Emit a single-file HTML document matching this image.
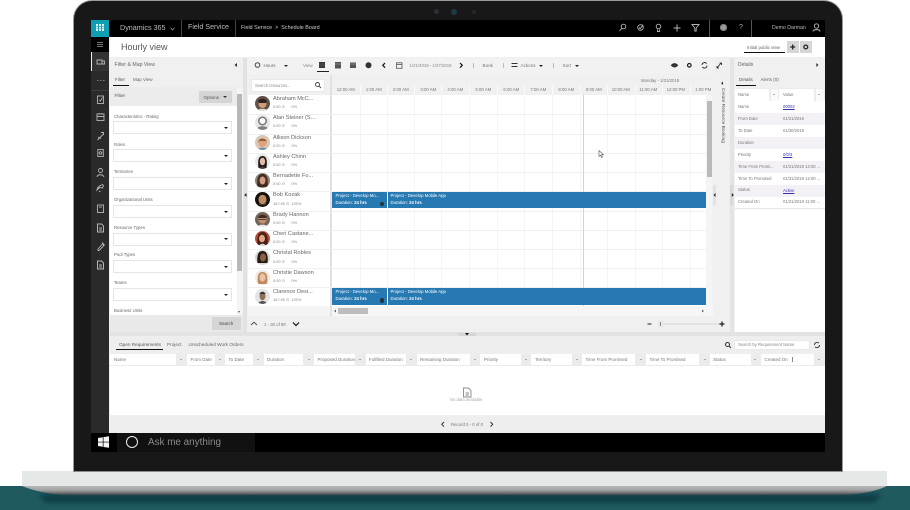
<!DOCTYPE html>
<html><head><meta charset="utf-8"><title>Schedule Board</title>
<style>
html,body{margin:0;padding:0;background:#fff;overflow:hidden}
#o{position:relative;width:910px;height:510px;overflow:hidden;background:#fff}
#p{position:absolute;left:0;top:0;width:910px;height:510px;filter:blur(.35px);font-family:"Liberation Sans",sans-serif}
#p div,#p svg,#p span{position:absolute}
.t{white-space:nowrap;font-size:4.3px;line-height:6px;color:#666}
.n{font-size:5.6px;color:#666}
.s{font-size:3.9px;color:#888}
.h{font-size:4.3px;color:#777;width:27.6px;text-align:center;top:87px}
.i{background:#fff;border:1px solid #e6e3e9;box-sizing:border-box;left:113px;width:119px;height:13px}
.a{width:0;height:0;border-left:2px solid transparent;border-right:2px solid transparent;border-top:2px solid #222}
.v{width:1px;top:95px;height:211px;background:#f4f5f6}
.r{left:248px;width:458px;height:1px;background:#eef0f1}
.av{width:15px;height:15px;left:254.5px;border-radius:50%;overflow:hidden;background:#ddd}
.c{font-size:4.5px;color:#777;top:356.5px}
.cb{background:#fff;top:354px;height:11px}
.dd{width:0;height:0;border-left:1.5px solid transparent;border-right:1.5px solid transparent;border-top:1.7px solid #666;top:359px}
.w{font-size:4.3px;color:#fff}
.dt{font-size:4.2px;color:#777;left:738px}
.dv{font-size:4.2px;color:#777;left:783px}
</style></head><body><div id="o"><div id="p">

<!-- teal floor -->
<div style="left:-10px;top:486px;width:930px;height:34px;background:#1f5a61"></div>
<div style="left:40px;top:494px;width:840px;height:9px;background:#103f47;border-radius:0 0 30px 30px;filter:blur(2px)"></div>
<!-- base -->
<svg style="left:22px;top:471px" width="866" height="26" viewBox="0 0 866 26"><defs><linearGradient id="g" x1="0" y1="0" x2="0" y2="1"><stop offset="0" stop-color="#b3b8b8"/><stop offset=".45" stop-color="#a2a4a4"/><stop offset=".8" stop-color="#6a6b6c"/><stop offset="1" stop-color="#3a4448"/></linearGradient></defs><path d="M0 15H865C855 20 840 23 822 24H44C26 23 12 20 0 15Z" fill="url(#g)"/><rect width="865" height="15" fill="#e4e8e7"/></svg>
<!-- bezel -->
<div style="left:72.5px;top:0;width:770px;height:472px;box-sizing:border-box;background:#181818;border:1px solid #9b9b9d;border-bottom-color:#8a8c8c;border-radius:19px 19px 0 0"></div>
<div style="left:434px;top:9px;width:5px;height:5px;border-radius:50%;background:#2a3036"></div>
<div style="left:451px;top:8.5px;width:6px;height:6px;border-radius:50%;background:#1d3a48"></div>
<div style="left:471.5px;top:9.5px;width:4px;height:4px;border-radius:50%;background:#24282b"></div>

<!-- screen -->
<div style="left:91px;top:20px;width:734px;height:413px;background:#efeff0"></div>
<!-- top nav -->
<div style="left:91px;top:20px;width:734px;height:16.5px;background:#000"></div>
<div style="left:91px;top:20px;width:18px;height:16.5px;background:#0f9fb5"></div>
<svg style="left:96px;top:24px" width="8" height="7"><path d="M0 0h2v2H0zM3 0h2v2H3zM6 0h2v2H6zM0 2.6h2v2H0zM3 2.6h2v2H3zM6 2.6h2v2H6zM0 5h2v2H0zM3 5h2v2H3zM6 5h2v2H6z" fill="#dff4f7"/></svg>
<div class="t" style="left:120px;top:23px;font-size:7.2px;line-height:9px;color:#bbb">Dynamics 365</div>
<svg style="left:170px;top:27px" width="5" height="4"><path d="M.5.7 2.5 3 4.500.7" fill="none" stroke="#aaa" stroke-width=".7"/></svg>
<div style="left:181px;top:20px;width:1px;height:16.500px;background:#444"></div>
<div class="t" style="left:188px;top:22.500px;font-size:7.100px;line-height:9px;color:#bbb">Field Service</div>
<div style="left:235px;top:20px;width:1px;height:16.500px;background:#444"></div>
<div class="t" style="left:241px;top:25px;font-size:5.400px;color:#ccc">Field Service &nbsp;&gt;&nbsp; Schedule Board</div>
<!-- top icons -->
<svg style="left:617px;top:22px" width="150" height="12" fill="none" stroke="#b5b5b5" stroke-width=".9">
<circle cx="6.500" cy="4.500" r="2.300"/><path d="M5 6 2.500 9"/>
<circle cx="23.500" cy="5.500" r="2.800"/><path d="M22 5.500l1.200 1.200 3-4"/>
<circle cx="41.500" cy="4.500" r="2.300"/><path d="M40.500 7.500v2h2v-2"/>
<path d="M60 2.500v7M56.500 6h7" stroke-width="1"/>
<path d="M75 2.500h7l-2.800 3.500v3h-1.400v-3z"/>
<circle cx="106.500" cy="5.500" r="3.200" fill="#999" stroke="#777"/>
</svg>
<div style="left:709px;top:20px;width:1px;height:16.500px;background:#555"></div>
<div style="left:751px;top:20px;width:1px;height:16.500px;background:#555"></div>
<div class="t" style="left:739px;top:23.500px;font-size:7px;line-height:8px;color:#aaa">?</div>
<div class="t" style="left:772px;top:25px;font-size:5.200px;color:#bbb">Demo Darman</div>
<svg style="left:812px;top:23px" width="9" height="10" fill="none" stroke="#bbb" stroke-width=".9"><circle cx="4.500" cy="3" r="2.200"/><path d="M1 8.500c.5-2.500 6.500-2.500 7 0"/></svg>

<!-- side nav -->
<div style="left:91px;top:36.500px;width:18px;height:396.500px;background:#2a2a2a"></div>
<div style="left:91px;top:36.500px;width:18px;height:16px;background:#000"></div>
<svg style="left:96px;top:42px" width="8" height="6"><path d="M1 .5h6M1 2.500h6M1 4.500h6" stroke="#999" stroke-width=".8"/></svg>
<div style="left:91px;top:52px;width:1.300px;height:19px;background:#eee"></div>
<div style="left:92.300px;top:52px;width:16.700px;height:19px;background:#333"></div>
<div style="left:91px;top:89.500px;width:18px;height:1px;background:#3d3d3d"></div>
<svg style="left:91px;top:52px" width="18" height="230" fill="none" stroke="#b5b5b5" stroke-width=".9">
<path d="M6 8h5v4H6zM11 9h2.500v3H11z"/>
<path d="M6.500 28.500h.8M9.500 28.500h.8M12.500 28.500h.8" stroke="#ccc"/>
<rect x="6.500" y="44" width="6" height="7.500"/><path d="M8 48l1.500 1 2-3.500"/>
<rect x="6" y="62" width="7" height="6.500"/><path d="M6 64.500h7M8 62v-1M11 62v-1"/>
<path d="M6.500 88l6-6M10 80.500h2.500V83M7 85l3 1.500" />
<rect x="6.800" y="97.500" width="5.500" height="7"/><circle cx="9.500" cy="101" r="1.300"/>
<circle cx="9.500" cy="118.500" r="2"/><path d="M6 125c.5-3 6-3 7 0"/>
<path d="M6 138l2.500-2.500 3 .5 1-2.500-1-1-3 1.500-2 2z M8 139l1.500 1"/>
<rect x="6.500" y="153" width="6" height="7.500"/><path d="M8 155h3"/>
<path d="M6.500 172h4l2 2v6h-6zM8 176h3M8 178h3" stroke-width="1"/>
<path d="M7 197l4.500-5 1.500 1.500-5 5H7zM11 190.500l2.500 2.500"/>
<path d="M6.500 209h4l2 2v6h-6zM8 213h3M8 215h3" stroke-width="1"/>
</svg>

<!-- title row -->
<div style="left:109.500px;top:36.500px;width:715.500px;height:20.500px;background:#fff"></div>
<div class="t" style="left:121px;top:41.500px;font-size:9px;line-height:11px;color:#555">Hourly view</div>
<div class="t" style="left:747px;top:44.500px;font-size:4.400px;color:#666">Initial public view</div>
<div style="left:743.500px;top:52px;width:41px;height:1.100px;background:#111"></div>
<div style="left:787px;top:40.500px;width:11.500px;height:12px;background:#d6d6d6"></div>
<div style="left:800px;top:40.500px;width:11.500px;height:12px;background:#d6d6d6"></div>
<svg style="left:787px;top:40.500px" width="25" height="12"><path d="M5.700 3.500v5M3.200 6h5" stroke="#222" stroke-width="1.300"/><circle cx="18.800" cy="6" r="1.900" fill="none" stroke="#222" stroke-width="1.300"/></svg>

<!-- filter panel -->
<div style="left:110px;top:58px;width:133px;height:274px;background:#f1f0f1"></div>
<div class="t" style="left:114.500px;top:61.500px;font-size:5.200px;color:#666">Filter &amp; Map View</div>
<svg style="left:234px;top:63px" width="3" height="4"><path d="M3 0v4L.5 2z" fill="#333"/></svg>
<div class="t" style="left:115px;top:76.500px;font-size:4.500px;color:#555">Filter</div>
<div class="t" style="left:133px;top:76.500px;font-size:4.500px;color:#666">Map View</div>
<div style="left:112.500px;top:84.500px;width:16px;height:1px;background:#111"></div>
<div style="left:110px;top:87px;width:127px;height:19px;background:#ececec"></div>
<div style="left:110px;top:106px;width:127px;height:209px;background:#fff"></div>
<div class="t" style="left:114.500px;top:94px;font-size:4.800px;color:#555">Filter</div>
<div style="left:198.500px;top:91px;width:33px;height:12px;background:#d5d5d5"></div>
<div class="t" style="left:203.500px;top:94.500px;font-size:4.500px;color:#555">Options</div>
<div class="a" style="left:223px;top:96.300px;border-top-color:#333"></div>
<div class="t" style="left:114px;top:113.500px">Characteristics - Rating</div><div class="i" style="top:121px"></div><div class="a" style="left:224px;top:127px"></div>
<div class="t" style="left:114px;top:141.500px">Roles</div><div class="i" style="top:149px"></div><div class="a" style="left:224px;top:155px"></div>
<div class="t" style="left:114px;top:169px">Territories</div><div class="i" style="top:177px"></div><div class="a" style="left:224px;top:183px"></div>
<div class="t" style="left:114px;top:196.500px">Organizational Units</div><div class="i" style="top:205px"></div><div class="a" style="left:224px;top:210.500px"></div>
<div class="t" style="left:114px;top:224.500px">Resource Types</div><div class="i" style="top:232.500px"></div><div class="a" style="left:224px;top:238px"></div>
<div class="t" style="left:114px;top:252px">Pool Types</div><div class="i" style="top:260px"></div><div class="a" style="left:224px;top:266px"></div>
<div class="t" style="left:114px;top:280px">Teams</div><div class="i" style="top:288px"></div><div class="a" style="left:224px;top:294px"></div>
<div class="t" style="left:114px;top:308px">Business Units</div>
<div style="left:237px;top:88px;width:5.500px;height:227px;background:#f4f4f4"></div>
<div style="left:237px;top:94px;width:5px;height:177px;background:#b8b8b8"></div>
<div class="a" style="left:237.800px;top:311px;border-top-color:#555;border-left-width:1.500px;border-right-width:1.500px"></div>
<div style="left:110px;top:315px;width:133px;height:17px;background:#e9e9ea"></div>
<div style="left:212px;top:317px;width:28.500px;height:13px;background:#d5d5d5"></div>
<div class="t" style="left:219px;top:320.500px;font-size:4.500px;color:#444">Search</div>

<!-- splitter -->
<div style="left:243px;top:58px;width:3.500px;height:274px;background:#e2e2e3"></div>
<svg style="left:244px;top:193px" width="3" height="4"><path d="M2.500 0v4L.2 2z" fill="#222"/></svg>

<!-- schedule toolbar -->
<div style="left:247px;top:58px;width:466px;height:16px;background:#f2f2f2"></div>
<svg style="left:253px;top:60px" width="12" height="11" fill="none" stroke="#444" stroke-width="1"><circle cx="4.500" cy="5" r="2.300"/></svg>
<div class="t" style="left:263.500px;top:62.500px;font-size:4.500px;color:#666">Hours</div>
<div class="a" style="left:283.500px;top:64.500px"></div>
<div class="t" style="left:303px;top:62.500px;font-size:4.500px;color:#888">View</div>
<svg style="left:317px;top:60px" width="60" height="11"><path d="M2 2h6v6H2z" fill="#333"/><path d="M2 4h6M2 6h6" stroke="#888" stroke-width=".4"/><path d="M18 2h6v6.500h-6zM33 2.500h6v5.500h-6z" fill="#555"/><path d="M18 4h6M33 4h6" stroke="#ccc" stroke-width=".4"/><circle cx="51.500" cy="5.300" r="3" fill="#333"/></svg>
<div style="left:317px;top:70.500px;width:12px;height:1px;background:#222"></div>
<svg style="left:381px;top:60px" width="90" height="11" fill="none"><path d="M4 3 1.800 5.300 4 7.700" stroke="#111" stroke-width="1.200"/><rect x="15.500" y="2.800" width="5.500" height="5.500" stroke="#555" stroke-width=".8"/><path d="M15.500 4.500h5.500" stroke="#555" stroke-width=".8"/><path d="M79 3l2.300 2.300L79 7.700" stroke="#111" stroke-width="1.200"/></svg>
<div class="t" style="left:409.500px;top:62.500px;font-size:4.300px;color:#888">1/21/2019 - 1/27/2019</div>
<div style="left:472.500px;top:63px;width:.7px;height:5px;background:#bbb"></div>
<div class="t" style="left:482.500px;top:62.500px;font-size:4.600px;color:#777">Book</div>
<div style="left:502.500px;top:63px;width:.7px;height:5px;background:#bbb"></div>
<svg style="left:511px;top:62px" width="7" height="6"><path d="M.5 1.500h6M.5 4.500h6" stroke="#333" stroke-width="1"/></svg>
<div class="t" style="left:520.500px;top:62.500px;font-size:4.600px;color:#777">Actions</div>
<div class="a" style="left:539px;top:64.500px"></div>
<div style="left:552.500px;top:63px;width:.7px;height:5px;background:#bbb"></div>
<div class="t" style="left:562.500px;top:62.500px;font-size:4.600px;color:#777">Sort</div>
<div class="a" style="left:574.500px;top:64.500px"></div>
<svg style="left:670px;top:60px" width="55" height="11" fill="none" stroke="#222"><path d="M1 5.300c2-2.500 5-2.500 7 0-2 2.500-5 2.500-7 0z" fill="#333" stroke-width=".5"/><circle cx="19.300" cy="5.300" r="1.800" stroke-width="1.200"/><path d="M32 5a2.600 2.600 0 0 1 4.700-1.400M37 5.600a2.600 2.600 0 0 1-4.700 1.400" stroke-width=".9"/><path d="M47 8l4-5M49.500 3H51.500V5M47 6v2h2" stroke-width=".8"/></svg>

<!-- resources + grid -->
<div style="left:247px;top:74px;width:466px;height:242px;background:#f0f0f1"></div>
<div style="left:248px;top:95px;width:82px;height:211px;background:#fff"></div>
<div style="left:331.500px;top:95px;width:374.500px;height:211px;background:#fff"></div>
<div style="left:330px;top:75px;width:1.500px;height:241px;background:#e1e1e3"></div>
<div style="left:251px;top:79px;width:74px;height:12.500px;background:#fff;border:1px solid #e8e8e8;box-sizing:border-box"></div>
<div class="t" style="left:255px;top:83px;font-size:4.100px;color:#888">Search resources...</div>
<svg style="left:314px;top:81px" width="8" height="8" fill="none" stroke="#444" stroke-width=".9"><circle cx="3.500" cy="3.500" r="2"/><path d="M5 5l2 2"/></svg>
<div class="t" style="left:641px;top:77.500px;font-size:4.300px;color:#777">Monday - 1/21/2019</div>
<!-- headers -->
<div class="t h" style="left:332px">12:00 AM</div><div class="t h" style="left:360px">1:00 AM</div><div class="t h" style="left:387px">2:00 AM</div><div class="t h" style="left:414.500px">3:00 AM</div><div class="t h" style="left:441.500px">4:00 AM</div><div class="t h" style="left:469.500px">5:00 AM</div><div class="t h" style="left:497.500px">6:00 AM</div><div class="t h" style="left:524.500px">7:00 AM</div><div class="t h" style="left:552.500px">8:00 AM</div><div class="t h" style="left:580px">9:00 AM</div><div class="t h" style="left:607px">10:00 AM</div><div class="t h" style="left:634.500px">11:00 AM</div><div class="t h" style="left:662px">12:00 PM</div><div class="t h" style="left:689.500px">1:00 PM</div>
<div style="left:359.700px;top:85px;width:1px;height:10px;background:#fafafa"></div><div style="left:386.700px;top:85px;width:1px;height:10px;background:#fafafa"></div><div style="left:414.300px;top:85px;width:1px;height:10px;background:#fafafa"></div><div style="left:441.300px;top:85px;width:1px;height:10px;background:#fafafa"></div><div style="left:469.300px;top:85px;width:1px;height:10px;background:#fafafa"></div><div style="left:497.300px;top:85px;width:1px;height:10px;background:#fafafa"></div><div style="left:524.300px;top:85px;width:1px;height:10px;background:#fafafa"></div><div style="left:552.300px;top:85px;width:1px;height:10px;background:#fafafa"></div><div style="left:580px;top:85px;width:1px;height:10px;background:#fafafa"></div><div style="left:607px;top:85px;width:1px;height:10px;background:#fafafa"></div><div style="left:634.500px;top:85px;width:1px;height:10px;background:#fafafa"></div><div style="left:662px;top:85px;width:1px;height:10px;background:#fafafa"></div><div style="left:689.500px;top:85px;width:1px;height:10px;background:#fafafa"></div>
<!-- grid lines -->
<div class="v" style="left:359.700px"></div><div class="v" style="left:386.700px"></div><div class="v" style="left:414.300px"></div><div class="v" style="left:441.300px"></div><div class="v" style="left:469.300px"></div><div class="v" style="left:497.300px"></div><div class="v" style="left:524.300px"></div><div class="v" style="left:552.300px"></div><div class="v" style="left:580px"></div><div class="v" style="left:607px"></div><div class="v" style="left:634.500px"></div><div class="v" style="left:662px"></div><div class="v" style="left:689.500px"></div>
<div class="r" style="top:114.300px"></div><div class="r" style="top:133.500px"></div><div class="r" style="top:152.700px"></div><div class="r" style="top:172px"></div><div class="r" style="top:191.300px"></div><div class="r" style="top:210.700px"></div><div class="r" style="top:229.700px"></div><div class="r" style="top:249px"></div><div class="r" style="top:268.300px"></div><div class="r" style="top:287.300px"></div>
<div style="left:582.500px;top:95px;width:1.700px;height:211px;background:#c6d8de"></div>
<!-- bookings -->
<div style="left:332px;top:192.300px;width:54.500px;height:16.200px;background:#2779b2"></div>
<div style="left:387.500px;top:192.300px;width:318px;height:16.200px;background:#2779b2"></div>
<div style="left:332px;top:288.300px;width:54.500px;height:16.700px;background:#2779b2"></div>
<div style="left:387.500px;top:288.300px;width:318px;height:16.700px;background:#2779b2"></div>
<div class="t w" style="left:335.500px;top:193px">Project - Develop Mo...</div><div class="t w" style="left:335.500px;top:199.500px"><span style="position:static">Duration: <b>24 hrs</b></span></div>
<div class="t w" style="left:390.500px;top:193px">Project - Develop Mobile App</div><div class="t w" style="left:390.500px;top:199.500px"><span style="position:static">Duration: <b>24 hrs</b></span></div>
<div class="t w" style="left:335.500px;top:289.300px">Project - Develop Mo...</div><div class="t w" style="left:335.500px;top:295.700px"><span style="position:static">Duration: <b>24 hrs</b></span></div>
<div class="t w" style="left:390.500px;top:289.300px">Project - Develop Mobile App</div><div class="t w" style="left:390.500px;top:295.700px"><span style="position:static">Duration: <b>24 hrs</b></span></div>
<div style="left:379.500px;top:201.500px;width:4.500px;height:4.500px;border-radius:50%;background:#243440"></div>
<div style="left:379.500px;top:298px;width:4.500px;height:4.500px;border-radius:50%;background:#243440"></div>

<!-- resource names -->
<div class="t n" style="left:273px;top:96px">Abraham McC...</div><div class="t s" style="left:273px;top:104px">0:00 ⊙ &nbsp; &nbsp; &nbsp;0%</div>
<div class="t n" style="left:273px;top:115px">Alan Steiner (S...</div><div class="t s" style="left:273px;top:123px">0:00 ⊙ &nbsp; &nbsp; &nbsp;0%</div>
<div class="t n" style="left:273px;top:134.500px">Allison Dickson</div><div class="t s" style="left:273px;top:142.500px">0:00 ⊙ &nbsp; &nbsp; &nbsp;0%</div>
<div class="t n" style="left:273px;top:154px">Ashley Chinn</div><div class="t s" style="left:273px;top:162px">0:00 ⊙ &nbsp; &nbsp; &nbsp;0%</div>
<div class="t n" style="left:273px;top:173px">Bernadette Fo...</div><div class="t s" style="left:273px;top:181px">0:00 ⊙ &nbsp; &nbsp; &nbsp;0%</div>
<div class="t n" style="left:273px;top:192px">Bob Kozak</div><div class="t s" style="left:273px;top:200.500px">16?:59 ⊙ &nbsp;100%</div>
<div class="t n" style="left:273px;top:211.500px">Brady Hannon</div><div class="t s" style="left:273px;top:219.500px">0:00 ⊙ &nbsp; &nbsp; &nbsp;0%</div>
<div class="t n" style="left:273px;top:231px">Cheri Castane...</div><div class="t s" style="left:273px;top:239px">0:00 ⊙ &nbsp; &nbsp; &nbsp;0%</div>
<div class="t n" style="left:273px;top:250px">Christal Robles</div><div class="t s" style="left:273px;top:258.500px">0:00 ⊙ &nbsp; &nbsp; &nbsp;0%</div>
<div class="t n" style="left:273px;top:269.500px">Christie Dawson</div><div class="t s" style="left:273px;top:277.500px">0:00 ⊙ &nbsp; &nbsp; &nbsp;0%</div>
<div class="t n" style="left:273px;top:289px">Clarence Desi...</div><div class="t s" style="left:273px;top:297px">16?:59 ⊙ &nbsp;100%</div>
<!-- avatars -->
<div class="av" style="top:96px;background:#5e5147"><svg width="15" height="15"><circle cx="7.500" cy="8" r="4" fill="#d09a78"/><path d="M3 5c2-3 7-3 9 0l-1 2H4z" fill="#2e2520"/><path d="M2 15c1-3 10-3 11 0z" fill="#e8e2d8"/></svg></div>
<div class="av" style="top:115px;background:#e6e6e6"><svg width="15" height="15"><circle cx="7.500" cy="6" r="3.700" fill="#fff" stroke="#787878" stroke-width="1.500"/><path d="M1 15c1-5 12-5 13 0z" fill="#808080"/></svg></div>
<div class="av" style="top:134.500px;background:#d8c7b4"><svg width="15" height="15"><circle cx="7.500" cy="8" r="4" fill="#e0a27e"/><path d="M3 8c0-6 9-6 9 0l-1-2H4z" fill="#9a5b33"/><path d="M2 15c1-3 10-3 11 0z" fill="#6e8aa5"/></svg></div>
<div class="av" style="top:154px;background:#e9e7e5"><svg width="15" height="15"><path d="M3.500 14c-1-8 0-12 4-12s5 4 4 12z" fill="#201b19"/><ellipse cx="7.500" cy="7.500" rx="2.700" ry="3.700" fill="#e2bda4"/><path d="M4 15c1-3 6-3 7 0z" fill="#444"/></svg></div>
<div class="av" style="top:173px;background:#8c8276"><svg width="15" height="15"><path d="M2.500 14c-1-9 1-13 5-13s6 4 5 13z" fill="#3f2a20"/><ellipse cx="7.500" cy="7.500" rx="3" ry="4" fill="#d29d80"/></svg></div>
<div class="av" style="top:192px;background:#15110f"><svg width="15" height="15"><ellipse cx="7.500" cy="7.500" rx="4" ry="4.800" fill="#bf8b64"/><path d="M4 10c2 3 5 3 7 0v3H4z" fill="#4d3324"/></svg></div>
<div class="av" style="top:211.500px;background:#74655a"><svg width="15" height="15"><circle cx="7.500" cy="7.500" r="4" fill="#c98f6c"/><path d="M3 5c2-3 7-3 9 0l-1 1H4z" fill="#3c2c23"/><path d="M4 7.500h7" stroke="#222" stroke-width=".7"/><path d="M2 15c1-3 10-3 11 0z" fill="#eee"/></svg></div>
<div class="av" style="top:231px;background:#b8503a"><svg width="15" height="15"><path d="M2.500 14c-1-9 1-13 5-13s6 4 5 13z" fill="#4a2018"/><ellipse cx="7" cy="7.500" rx="3" ry="3.800" fill="#dfa584"/><path d="M4 15c1-3 6-3 7 0z" fill="#ddd"/></svg></div>
<div class="av" style="top:250px;background:#d9d6d2"><svg width="15" height="15"><path d="M2.500 13c-1-8 1-12 5-12s6 4 5 12z" fill="#251b15"/><ellipse cx="8" cy="7.500" rx="3" ry="4" fill="#8b6145"/></svg></div>
<div class="av" style="top:269.500px;background:#efeae5"><svg width="15" height="15"><path d="M3 14c-1-8 0-12 4.500-12S13 6 12 14z" fill="#c08a5e"/><ellipse cx="7.500" cy="7.500" rx="3" ry="4" fill="#eac4a8"/></svg></div>
<div class="av" style="top:289px;background:#e3e3e3"><svg width="15" height="15"><ellipse cx="7.500" cy="7" rx="3" ry="4.300" fill="#8f6f58"/><path d="M4.500 5c1-3 5-3 6 0z" fill="#333"/><path d="M3 15c1-4 8-4 9 0z" fill="#555"/></svg></div>

<!-- v scrollbar -->
<div style="left:706px;top:95px;width:6px;height:211px;background:#f4f4f4"></div>
<div style="left:706.500px;top:101px;width:5px;height:76px;background:#b9b9b9"></div>
<!-- h scroll -->
<div style="left:248px;top:306px;width:82px;height:10px;background:#f4f4f4"></div>
<div style="left:331.500px;top:306px;width:381px;height:10px;background:#f6f6f6"></div>
<div style="left:338px;top:308px;width:29.500px;height:5.500px;background:#bdbdbd"></div>
<svg style="left:333px;top:309px" width="4" height="4"><path d="M3 .5v3L1 2z" fill="#666"/></svg>
<svg style="left:701px;top:309px" width="4" height="4"><path d="M1 .5v3L3 2z" fill="#666"/></svg>
<!-- footer schedule -->
<div style="left:247px;top:316px;width:482px;height:16px;background:#f0f0f1"></div>
<svg style="left:250px;top:320px" width="50" height="8" fill="none"><path d="M1 5l3-2.800L7 5" stroke="#444" stroke-width=".9"/><path d="M43 2.500l3 3 3-3" stroke="#111" stroke-width="1.200"/></svg>
<div class="t" style="left:264px;top:321.500px;font-size:4.300px;color:#777">1 - 30 of 80</div>
<svg style="left:646px;top:319px" width="82" height="10"><path d="M1.500 5h4" stroke="#333" stroke-width="1.100"/><rect x="15" y="4" width="60" height="2" rx="1" fill="#dfe2e2"/><rect x="12" y="1.500" width="5.500" height="7" rx="1" fill="#e8e8e8"/><path d="M14.500 3v4" stroke="#888" stroke-width="1"/><path d="M76 2.500v5M73.500 5h5" stroke="#222" stroke-width="1.300"/></svg>

<!-- create booking panel -->
<div style="left:713px;top:58px;width:3px;height:258px;background:#f0f0f1"></div>
<div style="left:715.500px;top:75px;width:13px;height:241px;background:#f0f0f1"></div>
<div style="left:729.500px;top:58px;width:4px;height:274px;background:#e3e4e4"></div>
<div style="left:712.800px;top:185px;width:3px;height:20px;background:#e3e3e4"></div>
<div style="left:729.500px;top:185px;width:3px;height:20px;background:#d8d8d8"></div>
<svg style="left:713px;top:193px" width="22" height="4"><path d="M2.500 0v4L.5 2zM18.800 0v4l2 -2z" fill="#222"/></svg>
<svg style="left:720px;top:81px" width="4" height="5"><path d="M3 .500v3.500L1 2.200z" fill="#333"/></svg>
<div class="t" style="left:722px;top:88px;font-size:4.800px;color:#555;transform-origin:0 0;transform:rotate(90deg) translate(0,-3px)">Create Resource Booking</div>

<!-- details panel -->
<div style="left:734px;top:58px;width:91px;height:274px;background:#f0f0f1"></div>
<div class="t" style="left:738px;top:61.500px;font-size:5px;color:#666">Details</div>
<svg style="left:815.500px;top:63px" width="3" height="4"><path d="M.3 0v4L2.500 2z" fill="#333"/></svg>
<div class="t" style="left:739px;top:76.500px;font-size:4.500px;color:#555">Details</div>
<div class="t" style="left:760.500px;top:76.500px;font-size:4.500px;color:#666">Alerts (0)</div>
<div style="left:736px;top:84.500px;width:20px;height:1px;background:#111"></div>
<div style="left:734.500px;top:88px;width:90px;height:13px;background:#ecebee"></div>
<div style="left:735px;top:88.500px;width:34px;height:12px;background:#fff"></div>
<div style="left:770.500px;top:88.500px;width:7px;height:12px;background:#fafafa"></div>
<div style="left:779px;top:88.500px;width:35px;height:12px;background:#fff"></div>
<div style="left:815.500px;top:88.500px;width:8px;height:12px;background:#fafafa"></div>
<div class="t dt" style="top:91.500px">Name</div><div class="t dv" style="top:91.500px">Value</div>
<div class="dd" style="left:772.500px;top:94px"></div><div class="dd" style="left:818px;top:94px"></div>
<div style="left:734.500px;top:101px;width:90px;height:231px;background:#fff"></div>
<div style="left:734.500px;top:113px;width:90px;height:12px;background:#f4f1f6"></div>
<div style="left:734.500px;top:136.500px;width:90px;height:12px;background:#f4f1f6"></div>
<div style="left:734.500px;top:160.500px;width:90px;height:12px;background:#f4f1f6"></div>
<div style="left:734.500px;top:184.500px;width:90px;height:12px;background:#f4f1f6"></div>
<div style="left:734.500px;top:208px;width:90px;height:1px;background:#e8e4ea"></div>
<div class="t dt" style="top:104px">Name</div><div class="t dv" style="top:104px;color:#33a;text-decoration:underline">00002</div>
<div class="t dt" style="top:116px">From Date</div><div class="t dv" style="top:116px">01/21/2019</div>
<div class="t dt" style="top:128px">To Date</div><div class="t dv" style="top:128px">01/30/2019</div>
<div class="t dt" style="top:139.800px">Duration</div>
<div class="t dt" style="top:151.800px">Priority</div><div class="t dv" style="top:152px;color:#33a;text-decoration:underline">0/0/3</div>
<div class="t dt" style="top:163.500px">Time From Promi...</div><div class="t dv" style="top:163.500px">01/21/2019 12:00 ...</div>
<div class="t dt" style="top:175.500px">Time To Promised</div><div class="t dv" style="top:175.500px">01/31/2019 12:00 ...</div>
<div class="t dt" style="top:187.300px">Status</div><div class="t dv" style="top:187.500px;color:#33a;text-decoration:underline">Active</div>
<div class="t dt" style="top:199.300px">Created On</div><div class="t dv" style="top:199.300px">01/21/2019 11:00 ...</div>

<!-- horizontal splitter -->
<div style="left:109.500px;top:332px;width:715.500px;height:4px;background:#e3e3e4"></div>
<div style="left:458px;top:332.500px;width:18px;height:3px;background:#d6d6d6"></div>
<svg style="left:465px;top:333.300px" width="4" height="3"><path d="M0 0h4L2 2.500z" fill="#111"/></svg>

<!-- lower panel -->
<div style="left:109.500px;top:336px;width:715.500px;height:18px;background:#efeeef"></div>
<div class="t" style="left:119px;top:341.500px;font-size:4.700px;color:#555">Open Requirements</div>
<div class="t" style="left:167px;top:341.500px;font-size:4.700px;color:#666">Project</div>
<div class="t" style="left:188.500px;top:341.500px;font-size:4.700px;color:#666">Unscheduled Work Orders</div>
<div style="left:115.500px;top:349px;width:47.500px;height:1.200px;background:#111"></div>
<svg style="left:724px;top:341px" width="8" height="8" fill="none" stroke="#333" stroke-width="1"><circle cx="3.500" cy="3.500" r="2"/><path d="M5 5l2 2"/></svg>
<div style="left:734px;top:340px;width:76px;height:9.500px;background:#fff;border:1px solid #e9e9e9;box-sizing:border-box"></div>
<div class="t" style="left:738px;top:342px;font-size:4.200px;color:#888">Search by Requirement Name</div>
<svg style="left:813px;top:341px" width="8" height="8" fill="none" stroke="#333" stroke-width=".9"><path d="M1.500 4A2.600 2.600 0 0 1 6 2.200M6.500 4A2.600 2.600 0 0 1 2 5.800"/></svg>
<div style="left:109.500px;top:354px;width:715.500px;height:12px;background:#eceaed"></div>
<div class="cb" style="left:110px;width:66px"></div><div class="dd" style="left:180px"></div><div class="c" style="left:114px;white-space:nowrap">Name</div>
<div class="cb" style="left:187px;width:28px"></div><div class="dd" style="left:218.500px"></div><div class="c" style="left:190.500px;white-space:nowrap">From Date</div>
<div class="cb" style="left:225px;width:28px"></div><div class="dd" style="left:256.500px"></div><div class="c" style="left:228.500px;white-space:nowrap">To Date</div>
<div class="cb" style="left:264px;width:39px"></div><div class="dd" style="left:307.500px"></div><div class="c" style="left:267px;white-space:nowrap">Duration</div>
<div class="cb" style="left:314px;width:41px"></div><div class="dd" style="left:359px"></div><div class="c" style="left:317.500px;white-space:nowrap">Proposed Duration</div>
<div class="cb" style="left:366px;width:40px"></div><div class="dd" style="left:410px"></div><div class="c" style="left:369px;white-space:nowrap">Fulfilled Duration</div>
<div class="cb" style="left:416.500px;width:53px"></div><div class="dd" style="left:473.500px"></div><div class="c" style="left:420px;white-space:nowrap">Remaining Duration</div>
<div class="cb" style="left:480px;width:41px"></div><div class="dd" style="left:524.500px"></div><div class="c" style="left:484px;white-space:nowrap">Priority</div>
<div class="cb" style="left:531px;width:41px"></div><div class="dd" style="left:575.500px"></div><div class="c" style="left:535px;white-space:nowrap">Territory</div>
<div class="cb" style="left:582px;width:53px"></div><div class="dd" style="left:640px"></div><div class="c" style="left:585.500px;white-space:nowrap">Time From Promised</div>
<div class="cb" style="left:646px;width:53px"></div><div class="dd" style="left:703.500px"></div><div class="c" style="left:649.500px;white-space:nowrap">Time To Promised</div>
<div class="cb" style="left:710px;width:41px"></div><div class="dd" style="left:754px"></div><div class="c" style="left:713px;white-space:nowrap">Status</div>
<div class="cb" style="left:761px;width:53px"></div><div class="dd" style="left:818px"></div><div class="c" style="left:764.500px;white-space:nowrap">Created On</div>
<div style="left:791.500px;top:356.500px;width:.8px;height:5px;background:#888"></div>
<div style="left:109.500px;top:366px;width:715.500px;height:49px;background:#fff"></div>
<svg style="left:462px;top:387px" width="10" height="11" fill="none" stroke="#888" stroke-width=".9"><path d="M1.500 1h5l2.500 2.500V10H1.500z"/><path d="M3.500 6h3.500M3.500 8h3.500"/></svg>
<div class="t" style="left:450px;top:397px;font-size:4.200px;color:#aaa">No data available</div>
<div style="left:109.500px;top:415px;width:715.500px;height:18px;background:#efeeef"></div>
<svg style="left:441px;top:421px" width="54" height="7" fill="none" stroke="#333" stroke-width="1"><path d="M3 1 .8 3.300 3 5.600M49.500 1l2.200 2.300-2.200 2.300"/></svg>
<div class="t" style="left:451px;top:422px;font-size:4.300px;color:#777">Record 0 - 0 of 0</div>

<!-- taskbar -->
<div style="left:91px;top:433px;width:734px;height:19px;background:#000"></div>
<div style="left:117px;top:433px;width:138px;height:19px;background:#111"></div>
<svg style="left:97.500px;top:436px" width="12" height="12"><path d="M0 2 4.800 1.200V5.700H0zM5.500 1.100 11 .2V5.700H5.500zM0 6.400H4.800V10.800L0 10zM5.500 6.400H11V11.800L5.500 11z" fill="#f4f4f4"/></svg>
<div style="left:125.500px;top:436px;width:12px;height:12px;border:1.400px solid #eee;border-radius:50%;box-sizing:border-box"></div>
<div class="t" style="left:148px;top:435.500px;font-size:9.900px;line-height:13px;color:#8a8a8a">Ask me anything</div>

<!-- cursor -->
<svg style="left:598px;top:150px" width="7" height="9"><path d="M1 .5v6l1.500-1.300 1 2.300 1-.5-1-2.200h2z" fill="#fff" stroke="#555" stroke-width=".6"/></svg>
</div></div></body></html>
